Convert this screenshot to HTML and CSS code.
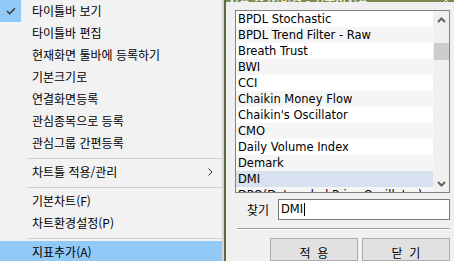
FILE: index.html
```html
<!DOCTYPE html>
<html lang="ko">
<head>
<meta charset="utf-8">
<link rel="stylesheet" href="styles.css">
</head>
<body>
<div class="screen">
  <div class="menu">
    <div class="item checked">
      <span class="check"><svg width="10" height="8" viewBox="0 0 10 8"><path d="M1 4 L3.6 6.6 L9 1.2" fill="none" stroke="#3c3c3c" stroke-width="1.5"/></svg></span>
      <span class="label">타이틀바 보기</span>
    </div>
    <div class="item"><span class="label">타이틀바 편집</span></div>
    <div class="item"><span class="label">현재화면 툴바에 등록하기</span></div>
    <div class="item"><span class="label">기본크기로</span></div>
    <div class="item"><span class="label">연결화면등록</span></div>
    <div class="item"><span class="label">관심종목으로 등록</span></div>
    <div class="item"><span class="label">관심그룹 간편등록</span></div>
    <div class="sep"><div class="line"></div></div>
    <div class="item sub"><span class="label">차트틀 적용/관리</span>
      <svg class="arrow" width="5" height="8" viewBox="0 0 5 8"><path d="M0.5 0.5 L4 4 L0.5 7.5" fill="none" stroke="#333" stroke-width="1"/></svg>
    </div>
    <div class="sep"><div class="line"></div></div>
    <div class="item"><span class="label">기본차트(F)</span></div>
    <div class="item"><span class="label">차트환경설정(P)</span></div>
    <div class="sep"><div class="line"></div></div>
    <div class="item hover"><span class="label">지표추가(A)</span></div>
  </div>
  <div class="gap"><div class="frame"></div></div>
  <div class="dialog">
    <div class="titlebar">
      <span class="title">지표 추가/변경 - 기술적지표</span>
      <svg class="close" width="12" height="9" viewBox="0 0 12 9"><path d="M1 -5 L11 5 M11 -5 L1 5" stroke="#e8ecdf" stroke-width="1"/></svg>
    </div>
    <div class="body">
      <div class="listbox">
        <div class="list">
          <div class="row">BPDL Stochastic</div>
          <div class="row">BPDL Trend Filter - Raw</div>
          <div class="row">Breath Trust</div>
          <div class="row">BWI</div>
          <div class="row">CCI</div>
          <div class="row">Chaikin Money Flow</div>
          <div class="row">Chaikin's Oscillator</div>
          <div class="row">CMO</div>
          <div class="row">Daily Volume Index</div>
          <div class="row">Demark</div>
          <div class="row selected">DMI</div>
          <div class="row">DPO(Detrended Price Oscillator)</div>
        </div>
        <div class="scrollbar">
          <div class="sbtn"><svg width="9" height="6" viewBox="0 0 9 6"><path d="M1 5 L4.5 1.5 L8 5" fill="none" stroke="#606060" stroke-width="2"/></svg></div>
          <div class="track"><div class="thumb"></div></div>
          <div class="sbtn"><svg width="9" height="6" viewBox="0 0 9 6"><path d="M1 1 L4.5 4.5 L8 1" fill="none" stroke="#606060" stroke-width="2"/></svg></div>
        </div>
      </div>
      <div class="search">
        <span class="search-label">찾기</span>
        <div class="input">DMI<span class="caret"></span></div>
      </div>
      <div class="rule"></div>
      <div class="buttons">
        <div class="btn">적  용</div>
        <div class="btn">닫  기</div>
      </div>
    </div>
  </div>
</div>
</body>
</html>
```

FILE: styles.css
```css
* { box-sizing: border-box; }
html, body { margin: 0; padding: 0; }
body {
  width: 454px;
  height: 261px;
  overflow: hidden;
  background: #dcdcdc;
  font-family: "Noto Sans CJK KR", "Noto Sans", sans-serif;
  font-size: 12px;
  color: #000;
}
.screen {
  display: flex;
  height: 261px;
}

/* context menu */
.menu {
  width: 222px;
  flex: none;
  background: #f2f2f2;
  display: flex;
  flex-direction: column;
}
.item {
  height: 22px;
  line-height: 22px;
  display: flex;
  align-items: center;
  padding-left: 32px;
  position: relative;
  flex: none;
  white-space: nowrap;
}
.item .label { line-height: 22px; }
.item.checked { padding-left: 0; }
.check {
  width: 21px;
  height: 22px;
  background: #91c9f7;
  display: flex;
  align-items: center;
  justify-content: center;
  margin-right: 11px;
}
.item.sub { justify-content: space-between; padding-right: 9px; }
.item.hover { background: #91c9f7; }
.sep {
  height: 7px;
  padding: 4px 0 0 27px;
  flex: none;
}
.sep .line { height: 1px; background: #d0d0d0; }

/* strip between */
.gap {
  width: 4px;
  flex: none;
  background: #d6d6d6;
  display: flex;
  justify-content: flex-end;
}
.gap .frame { width: 2px; background: #5d6b47; }

/* dialog */
.dialog {
  flex: 1;
  background: #f0f0f0;
  display: flex;
  flex-direction: column;
  min-width: 0;
}
.titlebar {
  height: 9px;
  background: #7b8a4e;
  display: flex;
  align-items: flex-start;
  overflow: hidden;
  padding-left: 2px;
}
.title {
  color: #fff;
  font-size: 12px;
  line-height: 12px;
  margin-top: -5px;
  white-space: nowrap;
}
.close { margin-left: auto; margin-right: 2px; }

.body {
  padding: 8px 0 0 9px;
}
.listbox {
  width: 215px;
  height: 183px;
  border: 1px solid #828282;
  background: #fff;
  display: flex;
  overflow: hidden;
}
.list {
  flex: 1;
  overflow: hidden;
  font-family: "DejaVu Sans", sans-serif;
  font-size: 11.5px;
}
.row {
  height: 16px;
  line-height: 16px;
  padding-left: 2px;
  white-space: nowrap;
}
.row:nth-child(even) { background: #f5f5f5; }
.row.selected { background: #d7e1ef; }
.scrollbar {
  width: 16px;
  flex: none;
  background: #f0f0f0;
  display: flex;
  flex-direction: column;
}
.sbtn {
  height: 17px;
  display: flex;
  align-items: center;
  justify-content: center;
  flex: none;
}
.track { flex: 1; padding: 15px 0 0 1px; }
.thumb { height: 17px; background: #cdcdcd; }

.search {
  margin-top: 6px;
  display: flex;
  align-items: center;
  height: 21px;
}
.search-label {
  width: 43px;
  padding-left: 12px;
  line-height: 21px;
  flex: none;
}
.input {
  width: 172px;
  height: 21px;
  border: 1px solid #7a7a7a;
  background: #fff;
  font-family: "DejaVu Sans", sans-serif;
  font-size: 11.5px;
  line-height: 19px;
  padding-left: 2px;
  display: flex;
  align-items: center;
}
.caret {
  width: 1px;
  height: 13px;
  background: #000;
  margin-left: 1px;
}
.rule {
  margin: 8px 0 0 2px;
  width: 213px;
  height: 2px;
  border-top: 1px solid #a0a0a0;
  border-bottom: 1px solid #ffffff;
}
.buttons {
  margin: 8px 0 0 35px;
  display: flex;
  gap: 4px;
}
.btn {
  width: 88px;
  height: 23px;
  border: 1px solid #adadad;
  background: #e1e1e1;
  text-align: center;
  line-height: 21px;
  white-space: pre;
  padding-top: 3px;
}
```
